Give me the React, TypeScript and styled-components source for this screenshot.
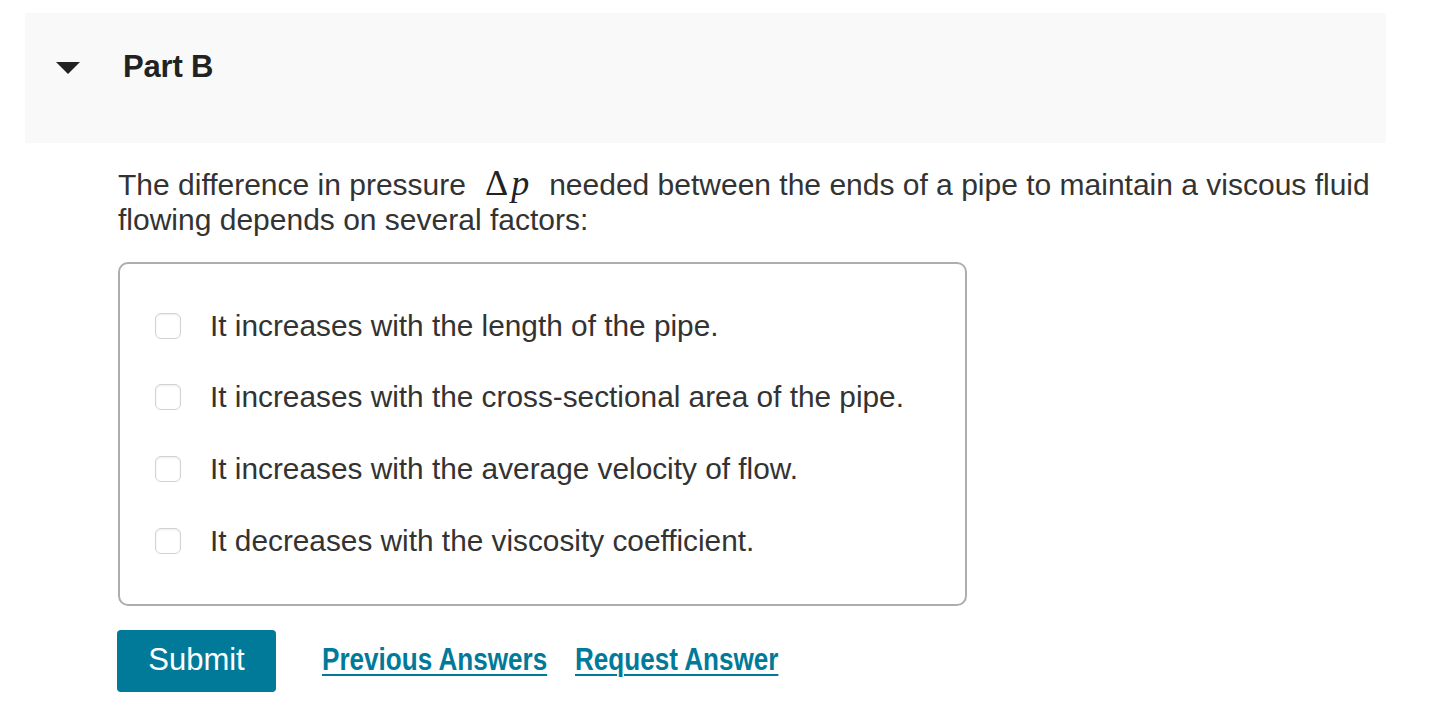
import React from "react";
import styled, { createGlobalStyle } from "styled-components";

const Global = createGlobalStyle`
  html, body { margin: 0; padding: 0; background: #ffffff; }
  body { font-family: "Liberation Sans", Arial, Helvetica, sans-serif; color: #333333; }
`;

const Page = styled.div`
  padding-top: 13px;
  padding-left: 25px;
  width: 1361px;
`;

const PartHeader = styled.div`
  height: 130px;
  background: #f9f9f9;
  display: flex;
  align-items: center;
  padding-left: 31px;
  padding-bottom: 22px;
  box-sizing: border-box;
`;

const Caret = styled.span`
  width: 0;
  height: 0;
  border-left: 12px solid transparent;
  border-right: 12px solid transparent;
  border-top: 12px solid #222222;
  margin-right: 43px;
  margin-top: 1px;
`;

const PartTitle = styled.h2`
  margin: 0;
  font-size: 31px;
  font-weight: 700;
  color: #222222;
  letter-spacing: -0.2px;
`;

const Content = styled.div`
  padding-left: 93px;
  padding-top: 24px;
`;

const Prompt = styled.p`
  margin: 0;
  font-size: 30px;
  line-height: 35px;
  color: #333333;
`;

const MathExpr = styled.span`
  font-family: "Liberation Serif", "Times New Roman", serif;
  font-size: 36px;
  line-height: 30px;
  margin: 0 18px 0 19px;
  color: #222222;
`;

const MathDelta = styled.span`
  margin-right: 3px;
`;

const MathVar = styled.i`
  font-family: "Liberation Serif", "Times New Roman", serif;
  padding-right: 2px;
`;

const OptionsBox = styled.div`
  margin-top: 25px;
  width: 849px;
  box-sizing: border-box;
  border: 2px solid #adadad;
  border-radius: 10px;
  padding: 26px 0 28px 35px;
`;

const OptionRow = styled.label`
  display: flex;
  align-items: center;
  height: 71.6px;
  font-size: 29.8px;
  color: #333333;
`;

const CheckBox = styled.span`
  width: 26px;
  height: 26px;
  box-sizing: border-box;
  border: 1.5px solid #d2d2d2;
  border-radius: 6px;
  background: #ffffff;
  box-shadow: inset 0 1px 2px rgba(0, 0, 0, 0.08);
  margin-right: 29px;
  flex-shrink: 0;
`;

const Actions = styled.div`
  margin-top: 24px;
  display: flex;
  align-items: center;
`;

const SubmitButton = styled.button`
  width: 159px;
  height: 62px;
  border: none;
  border-radius: 4px;
  background: #017a9a;
  color: #ffffff;
  font-family: "Liberation Sans", Arial, sans-serif;
  font-size: 31px;
  padding: 0 0 2px;
  margin-left: -1px;
  margin-right: 46px;
`;

const ActionLink = styled.a<{ $shrink: number; $gap?: number }>`
  display: inline-block;
  font-family: "Liberation Sans", Arial, sans-serif;
  font-weight: 700;
  font-size: 32px;
  line-height: 36px;
  color: #017a9a;
  text-decoration: underline;
  text-underline-offset: 4px;
  text-decoration-thickness: 2px;
  transform: scaleX(0.815);
  transform-origin: left center;
  margin-top: -5px;
  margin-right: ${(p) => (p.$gap ?? 0) - p.$shrink}px;
  cursor: pointer;
`;

const options = [
  "It increases with the length of the pipe.",
  "It increases with the cross-sectional area of the pipe.",
  "It increases with the average velocity of flow.",
  "It decreases with the viscosity coefficient.",
];

export default function App() {
  return (
    <>
      <Global />
      <Page>
        <PartHeader>
          <Caret />
          <PartTitle>Part B</PartTitle>
        </PartHeader>
        <Content>
          <Prompt>
            The difference in pressure
            <MathExpr>
              <MathDelta>Δ</MathDelta>
              <MathVar>p</MathVar>
            </MathExpr>
            needed between the ends of a pipe to maintain a viscous fluid flowing depends on several factors:
          </Prompt>
          <OptionsBox>
            {options.map((o) => (
              <OptionRow key={o}>
                <CheckBox />
                {o}
              </OptionRow>
            ))}
          </OptionsBox>
          <Actions>
            <SubmitButton>Submit</SubmitButton>
            <ActionLink $shrink={51} $gap={28}>Previous Answers</ActionLink>
            <ActionLink $shrink={46}>Request Answer</ActionLink>
          </Actions>
        </Content>
      </Page>
    </>
  );
}
